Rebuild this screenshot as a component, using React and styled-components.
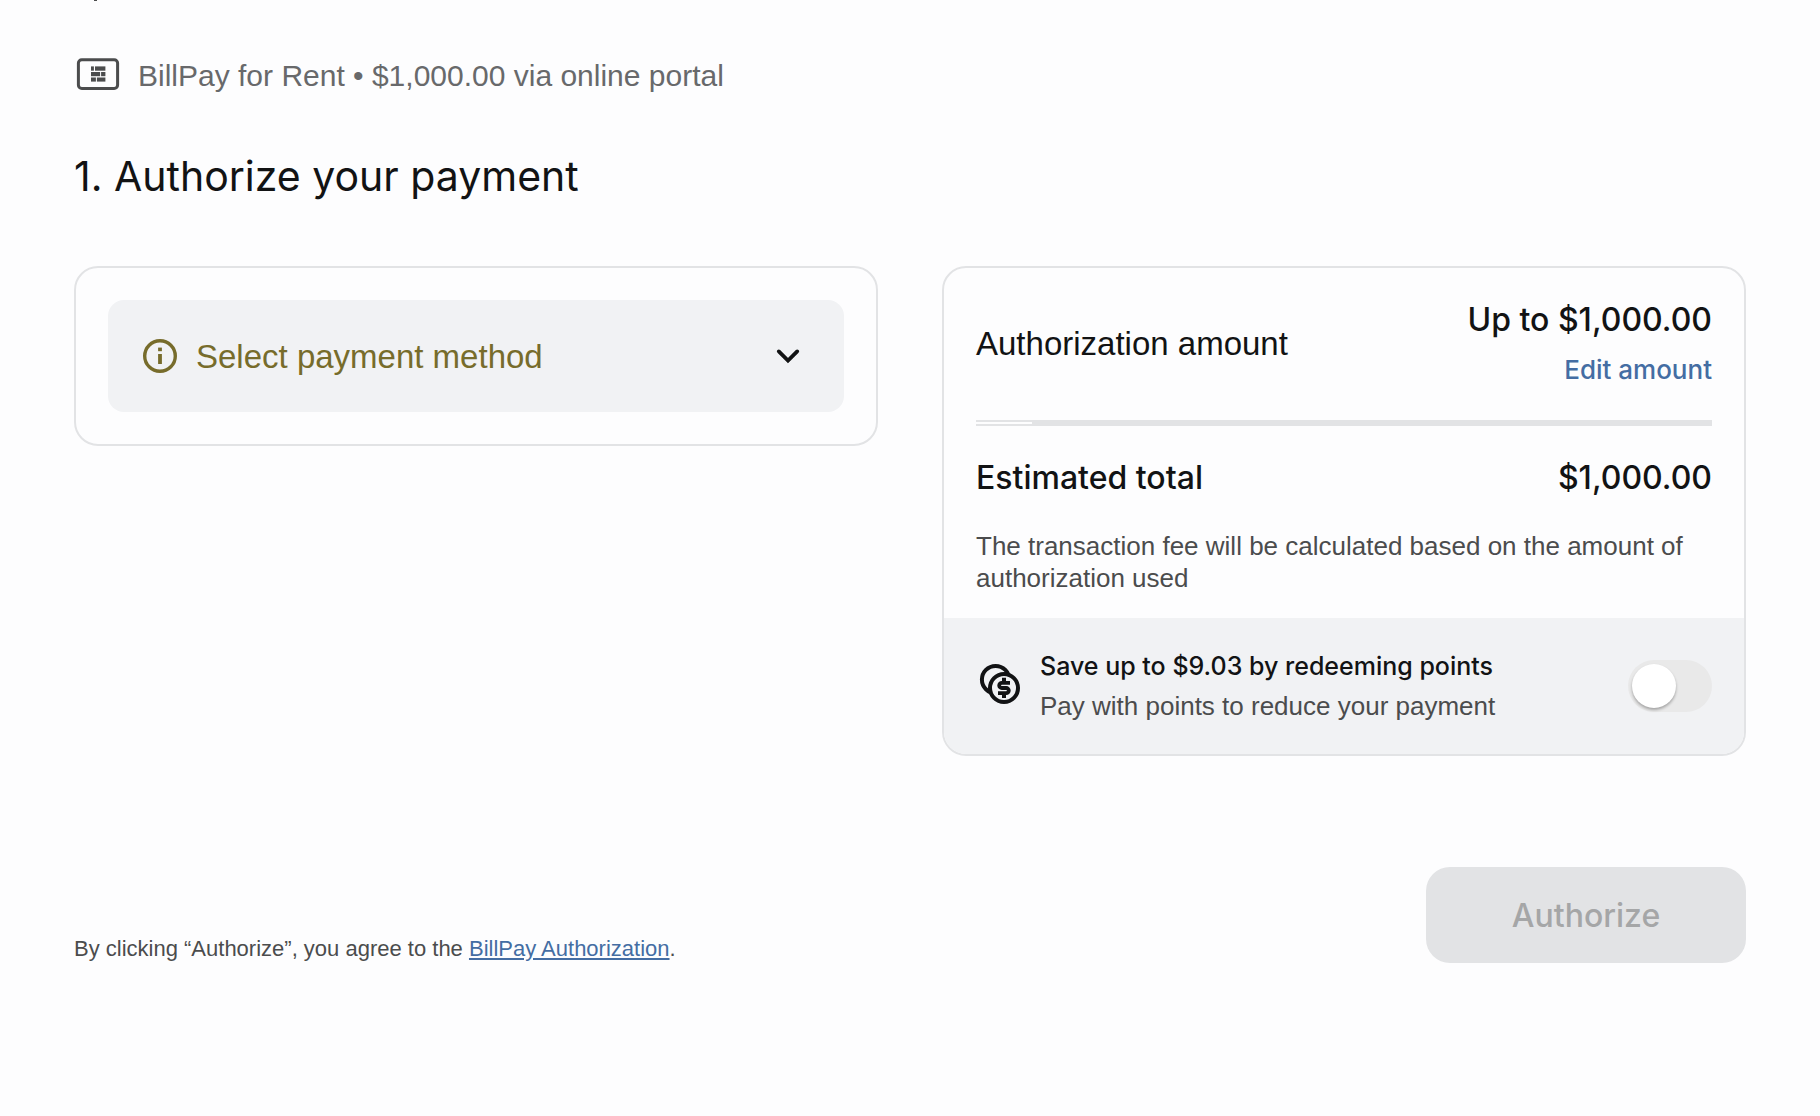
import { useState } from "react";
import styled, { createGlobalStyle, ThemeProvider } from "styled-components";

const theme = {
  bg: {
    page: "#fdfdfe",
    fill: "#f1f2f4",
    disabled: "#e2e3e5",
    toggle: "#e9e9e9",
  },
  text: {
    primary: "#121314",
    secondary: "#4b4c4d",
    muted: "#68696b",
    disabled: "#a5a6a7",
    link: "#446da3",
    notice: "#776c2b",
  },
  border: "#e2e3e5",
  font: {
    body: '"Liberation Sans", Arial, sans-serif',
    strong: 'Inter, "Liberation Sans", sans-serif',
  },
};

const BillIcon = () => (
  <svg width="48" height="48" viewBox="0 0 48 48" aria-hidden="true">
    <rect x="4.4" y="7.7" width="39.2" height="28.8" rx="3.4" fill="none" stroke="#4b4c4d" strokeWidth="3" />
    <g fill="#4b4c4d">
      <rect x="17" y="14.4" width="2.9" height="4.3" />
      <rect x="21" y="14.4" width="10.4" height="4.3" />
      <rect x="17" y="20" width="9.1" height="4.2" />
      <rect x="27.1" y="20" width="4.3" height="4.2" />
      <rect x="17" y="25.5" width="4.9" height="4.1" />
      <rect x="22.9" y="25.5" width="8.5" height="4.1" />
    </g>
  </svg>
);

const InfoIcon = () => (
  <svg width="40" height="40" viewBox="0 0 40 40" aria-hidden="true">
    <circle cx="20" cy="20" r="15.3" fill="none" stroke="currentColor" strokeWidth="3.4" />
    <rect x="18.1" y="11.6" width="3.8" height="3.6" fill="currentColor" />
    <rect x="18.1" y="18" width="3.8" height="10" fill="currentColor" />
  </svg>
);

const ChevronIcon = () => (
  <svg width="48" height="48" viewBox="0 0 48 48" aria-hidden="true">
    <path d="M14.8 19.4 24 28.6l9.2-9.2" fill="none" stroke="currentColor" strokeWidth="3.8" strokeLinecap="round" />
  </svg>
);

const PointsIcon = () => (
  <svg width="48" height="48" viewBox="0 0 48 48" aria-hidden="true">
    <g fill="#f1f2f4" stroke="#121314" strokeWidth="4">
      <circle cx="19.6" cy="17.6" r="13.7" />
      <circle cx="28" cy="26" r="14" />
    </g>
    <g fill="none" stroke="#121314">
      <path d="M28 15.8v4.6M28 31.6v4.4" strokeWidth="4" />
      <path
        d="M34 20.8h-8.2a2.6 2.6 0 0 0 0 5.2h4.4a2.6 2.6 0 0 1 0 5.2H22"
        strokeWidth="3.8"
      />
    </g>
  </svg>
);

export default function App() {
  const [method, setMethod] = useState("");
  const [redeem, setRedeem] = useState(false);

  return (
    <ThemeProvider theme={theme}>
      <GlobalStyle />
      <Page>
        <BillLine>
          <BillIcon />
          <span>BillPay for Rent • $1,000.00 via online portal</span>
        </BillLine>
        <Heading>1. Authorize your payment</Heading>

        <Columns>
          <Card>
            <CardBody>
              <SelectField>
                <IconSlot $side="start">
                  <InfoIcon />
                </IconSlot>
                <Select
                  aria-label="Payment method"
                  value={method}
                  onChange={(e) => setMethod(e.target.value)}
                >
                  <option value="">Select payment method</option>
                </Select>
                <IconSlot $side="end">
                  <ChevronIcon />
                </IconSlot>
              </SelectField>
            </CardBody>
          </Card>

          <Card>
            <SummaryBody>
              <SummaryRow>
                <Label>Authorization amount</Label>
                <AmountStack>
                  <Strong>Up to $1,000.00</Strong>
                  <EditButton type="button">Edit amount</EditButton>
                </AmountStack>
              </SummaryRow>
              <Divider />
              <SummaryRow>
                <Strong>Estimated total</Strong>
                <Strong>$1,000.00</Strong>
              </SummaryRow>
              <Note>The transaction fee will be calculated based on the amount of authorization used</Note>
            </SummaryBody>
            <PointsRow>
              <PointsIcon />
              <PointsText>
                <PointsLabel htmlFor="redeem">Save up to $9.03 by redeeming points</PointsLabel>
                <PointsHint id="redeem-hint">Pay with points to reduce your payment</PointsHint>
              </PointsText>
              <Toggle
                id="redeem"
                type="checkbox"
                role="switch"
                aria-describedby="redeem-hint"
                checked={redeem}
                onChange={(e) => setRedeem(e.target.checked)}
              />
            </PointsRow>
          </Card>
        </Columns>

        <Footer>
          <Legal>
            By clicking “Authorize”, you agree to the <a href="#authorization">BillPay Authorization</a>.
          </Legal>
          <AuthorizeButton type="button" disabled={!method}>Authorize</AuthorizeButton>
        </Footer>
      </Page>
    </ThemeProvider>
  );
}

const GlobalStyle = createGlobalStyle`
  *, *::before, *::after{
    box-sizing: border-box;
  }
  body{
    margin: 0;
    background: ${({ theme }) => theme.bg.page};
    color: ${({ theme }) => theme.text.primary};
    font-family: ${({ theme }) => theme.font.body};
  }
  button, select, input{
    font: inherit;
    margin: 0;
  }
  svg{
    display: block;
    flex: none;
  }
`

const Page = styled.main`
  padding: 52px 74px;
  /* tail of the line scrolled off above */
  background: linear-gradient(#4b4c4d, #4b4c4d) 94px 0 / 3px 1px no-repeat;
`

const BillLine = styled.div`
  display: flex;
  align-items: center;
  gap: 16px;
  font-size: 30px;
  line-height: 40px;
  color: ${({ theme }) => theme.text.muted};
`

const Heading = styled.h1`
  margin: 48px 0 62px;
  font-family: ${({ theme }) => theme.font.strong};
  font-size: 41px;
  line-height: 56px;
  font-weight: 400;
`

const Columns = styled.div`
  display: grid;
  grid-template-columns: 1fr 1fr;
  gap: 64px;
  align-items: start;
`

const Card = styled.section`
  border: 2px solid ${({ theme }) => theme.border};
  border-radius: 24px;
  overflow: hidden;
`

const CardBody = styled.div`
  padding: 32px;
`

const SelectField = styled.div`
  display: grid;
  align-items: center;
`

const Select = styled.select`
  grid-area: 1 / 1;
  width: 100%;
  height: 112px;
  padding: 0 88px;
  border: 0;
  border-radius: 16px;
  appearance: none;
  background: ${({ theme }) => theme.bg.fill};
  color: ${({ theme }) => theme.text.notice};
  font-size: 33px;
  cursor: pointer;
`

const IconSlot = styled.span`
  grid-area: 1 / 1;
  justify-self: ${({ $side }) => $side};
  z-index: 1;
  margin: 0 32px;
  pointer-events: none;
  color: ${({ $side, theme }) => ($side === "start" ? theme.text.notice : theme.text.primary)};
`

const SummaryBody = styled.div`
  display: flex;
  flex-direction: column;
  gap: 32px;
  padding: 32px 32px 24px;
`

const SummaryRow = styled.div`
  display: flex;
  align-items: center;
  justify-content: space-between;
`

const Label = styled.span`
  font-size: 33px;
  line-height: 40px;
`

const Strong = styled.span`
  font-family: ${({ theme }) => theme.font.strong};
  font-size: 32px;
  line-height: 40px;
  font-weight: 500;
`

const AmountStack = styled.div`
  display: flex;
  flex-direction: column;
  align-items: flex-end;
  gap: 12px;
`

const EditButton = styled.button`
  padding: 0;
  border: 0;
  background: none;
  color: ${({ theme }) => theme.text.link};
  font-family: ${({ theme }) => theme.font.strong};
  font-size: 26px;
  line-height: 36px;
  font-weight: 500;
  cursor: pointer;
`

const Divider = styled.div`
  height: 6px;
  padding: 2px 0;
  background: ${({ theme }) => theme.border};
  &::before{
    content: "";
    display: block;
    width: 56px;
    height: 2px;
    background: ${({ theme }) => theme.bg.page};
  }
`

const Note = styled.p`
  margin: 0;
  font-size: 26px;
  line-height: 32px;
  color: ${({ theme }) => theme.text.secondary};
`

const PointsRow = styled.div`
  display: flex;
  align-items: center;
  gap: 16px;
  padding: 28px 32px;
  background: ${({ theme }) => theme.bg.fill};
`

const PointsText = styled.div`
  flex: 1;
  display: flex;
  flex-direction: column;
  line-height: 40px;
`

const PointsLabel = styled.label`
  font-family: ${({ theme }) => theme.font.strong};
  font-size: 25px;
  font-weight: 500;
`

const PointsHint = styled.span`
  font-size: 26px;
  color: ${({ theme }) => theme.text.secondary};
`

const Toggle = styled.input`
  flex: none;
  width: 84px;
  height: 52px;
  padding: 4px;
  border-radius: 26px;
  appearance: none;
  background: ${({ theme }) => theme.bg.toggle};
  cursor: pointer;
  &::before{
    content: "";
    display: block;
    width: 44px;
    height: 44px;
    border-radius: 50%;
    background: #fff;
    box-shadow: 0 2px 3px rgba(0, 0, 0, 0.3);
  }
  &:checked{
    background: ${({ theme }) => theme.text.link};
  }
  &:checked::before{
    margin-left: auto;
  }
`

const Footer = styled.footer`
  display: flex;
  align-items: flex-end;
  justify-content: space-between;
  gap: 64px;
  margin-top: 111px;
`

const Legal = styled.p`
  margin: 0;
  font-size: 22px;
  line-height: 28px;
  color: ${({ theme }) => theme.text.secondary};
  a{
    color: ${({ theme }) => theme.text.link};
    text-decoration-thickness: 2px;
    text-underline-offset: 2px;
  }
`

const AuthorizeButton = styled.button`
  width: 320px;
  height: 96px;
  border: 0;
  border-radius: 24px;
  background: ${({ theme }) => theme.text.primary};
  color: #fff;
  font-family: ${({ theme }) => theme.font.strong};
  font-size: 32px;
  font-weight: 500;
  &:disabled{
    background: ${({ theme }) => theme.bg.disabled};
    color: ${({ theme }) => theme.text.disabled};
  }
`
